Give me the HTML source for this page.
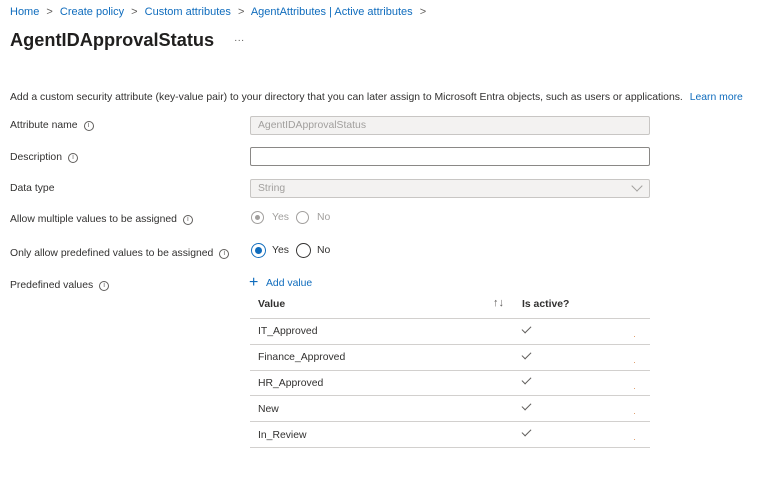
<!DOCTYPE html>
<html><head><style>
body{margin:0;width:767px;height:483px;background:#fff;font-family:"Segoe UI","Liberation Sans",sans-serif;font-size:10.4px;color:#323130;position:relative;overflow:hidden}
.a{position:absolute;white-space:nowrap}
.lnk{color:#0f6cbd}
.inp{position:absolute;left:250px;width:398px;height:17px;border:1px solid #8a8886;border-radius:2px;box-sizing:content-box}
.dis{background:#f3f2f1;border-color:#c8c6c4;color:#a19f9d}
.info{display:inline-block;width:8px;height:8px;border:1px solid #605e5c;border-radius:50%;font-size:7px;line-height:8px;text-align:center;margin-left:6px;vertical-align:1px;color:#605e5c}
.rad{position:absolute;width:13px;height:13px;border:1px solid #323130;border-radius:50%;box-sizing:border-box}
.hr{position:absolute;left:250px;width:400px;height:1px;background:#d2d0ce}
.ck{position:absolute;left:522px;width:8px;height:4px;border-left:1px solid #605e5c;border-bottom:1px solid #605e5c;transform:rotate(-45deg)}
.dot{position:absolute;left:634px;width:1px;height:1px;background:#e0a070}
</style></head><body>
<div class="a" style="left:10px;top:6px;font-size:11px"><span class="lnk">Home</span> <span style="color:#605e5c;margin:0 4px">&gt;</span> <span class="lnk">Create policy</span> <span style="color:#605e5c;margin:0 4px">&gt;</span> <span class="lnk">Custom attributes</span> <span style="color:#605e5c;margin:0 4px">&gt;</span> <span class="lnk">AgentAttributes | Active attributes</span> <span style="color:#605e5c;margin:0 4px">&gt;</span></div>
<div class="a" style="left:10px;top:30px;font-size:18.2px;font-weight:600;color:#201f1e">AgentIDApprovalStatus</div>
<div class="a" style="left:234px;top:35px;color:#605e5c">···</div>
<div class="a" style="left:10px;top:92px">Add a custom security attribute (key-value pair) to your directory that you can later assign to Microsoft Entra objects, such as users or applications. <span class="lnk" style="margin-left:4px">Learn more</span></div>
<div class="a" style="left:10px;top:120px">Attribute name<span class="info">i</span></div>
<div class="inp dis" style="top:116px"><span style="position:absolute;left:7px;top:3px">AgentIDApprovalStatus</span></div>
<div class="a" style="left:10px;top:152px">Description<span class="info">i</span></div>
<div class="inp" style="top:147px"></div>
<div class="a" style="left:10px;top:183px">Data type</div>
<div class="inp dis" style="top:179px"><span style="position:absolute;left:7px;top:3px">String</span><span style="position:absolute;right:8px;top:2px;width:7px;height:7px;border-right:1px solid #a19f9d;border-bottom:1px solid #a19f9d;transform:rotate(45deg)"></span></div>
<div class="a" style="left:10px;top:214px">Allow multiple values to be assigned<span class="info">i</span></div>
<div class="rad" style="left:251px;top:211px;border-color:#a19f9d"><span style="position:absolute;left:3px;top:3px;width:5px;height:5px;border-radius:50%;background:#a19f9d"></span></div>
<div class="a" style="left:272px;top:212px;color:#a19f9d">Yes</div>
<div class="rad" style="left:296px;top:211px;border-color:#a19f9d"></div>
<div class="a" style="left:317px;top:212px;color:#a19f9d">No</div>
<div class="a" style="left:10px;top:248px">Only allow predefined values to be assigned<span class="info">i</span></div>
<div class="rad" style="left:251px;top:243px;width:15px;height:15px;border-color:#0f6cbd"><span style="position:absolute;left:3px;top:3px;width:7px;height:7px;border-radius:50%;background:#0f6cbd"></span></div>
<div class="a" style="left:272px;top:245px">Yes</div>
<div class="rad" style="left:296px;top:243px;width:15px;height:15px"></div>
<div class="a" style="left:317px;top:245px">No</div>
<div class="a" style="left:10px;top:280px">Predefined values<span class="info">i</span></div>
<div class="a lnk" style="left:249px;top:275px;font-size:16px;line-height:16px">+</div>
<div class="a lnk" style="left:266px;top:278px">Add value</div>
<div class="a" style="left:258px;top:299px;font-weight:600">Value</div>
<div class="a" style="left:493px;top:297px;color:#605e5c;font-size:11px">↑↓</div>
<div class="a" style="left:522px;top:299px;font-weight:600">Is active?</div>
<div class="hr" style="top:318px"></div>
<div class="a" style="left:258px;top:326px">IT_Approved</div><div class="ck" style="top:326px"></div><div class="dot" style="top:336px"></div>
<div class="hr" style="top:344px"></div>
<div class="a" style="left:258px;top:352px">Finance_Approved</div><div class="ck" style="top:352px"></div><div class="dot" style="top:362px"></div>
<div class="hr" style="top:370px"></div>
<div class="a" style="left:258px;top:378px">HR_Approved</div><div class="ck" style="top:377px"></div><div class="dot" style="top:388px"></div>
<div class="hr" style="top:395px"></div>
<div class="a" style="left:258px;top:404px">New</div><div class="ck" style="top:403px"></div><div class="dot" style="top:413px"></div>
<div class="hr" style="top:421px"></div>
<div class="a" style="left:258px;top:430px">In_Review</div><div class="ck" style="top:429px"></div><div class="dot" style="top:439px"></div>
<div class="hr" style="top:447px"></div>
</body></html>
